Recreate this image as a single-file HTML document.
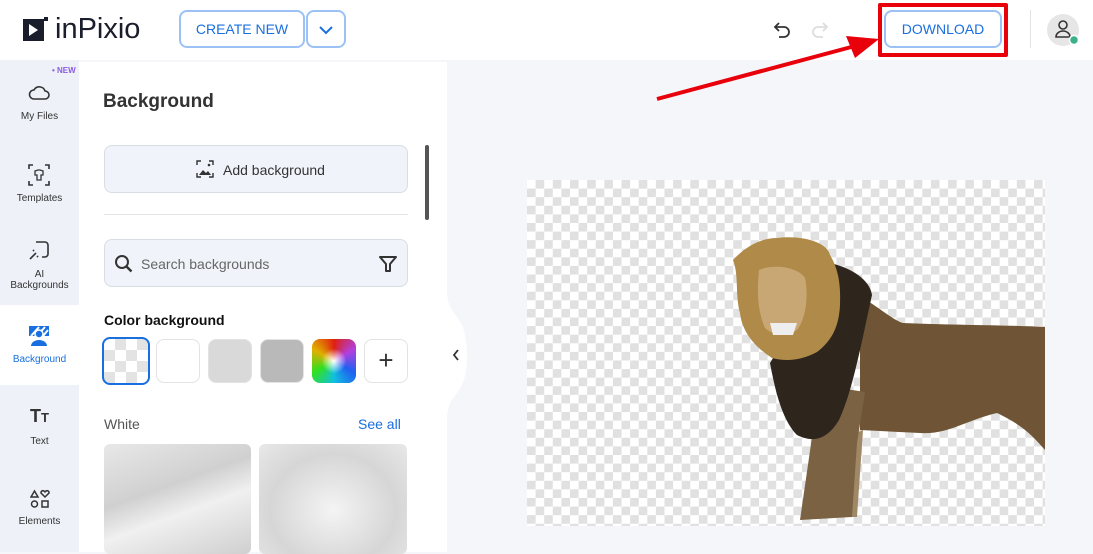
<!DOCTYPE html>
<html><head><style>
*{box-sizing:border-box;margin:0;padding:0}
body{width:1093px;height:552px;overflow:hidden;background:#f5f6fa;font-family:"Liberation Sans",sans-serif;position:relative}
.top{position:absolute;left:0;top:0;width:1093px;height:60px;background:#fff}
.side{position:absolute;left:0;top:60px;width:79px;height:492px;background:#eef1f8}
.si{position:absolute;left:0;width:79px;text-align:center;font-size:10px;color:#333}
.panel{position:absolute;left:79px;top:62px;width:368px;height:490px;background:#fff}
.btn{position:absolute;border:1px solid #d8dce6;background:#f0f3f9;border-radius:8px}
.sw{position:absolute;top:339px;width:44px;height:44px;border-radius:8px;border:1px solid #e3e3e3}
</style></head><body>
<div class="top"></div>
<svg style="position:absolute;left:22px;top:17px" width="28" height="26"><rect x="1" y="2" width="21" height="22" fill="#1a1d2b"/><path d="M7 7 L16 13 L7 19Z" fill="#fff"/><rect x="22" y="0" width="4" height="4" fill="#1a1d2b"/></svg>
<div style="position:absolute;left:55px;top:13px;font-size:29px;color:#1a1d2b">inPixio</div>
<div style="position:absolute;left:179px;top:10px;width:126px;height:38px;border:2px solid #9cc2f5;border-radius:8px;color:#1a6fe0;font-size:14px;text-align:center;line-height:34px">CREATE NEW</div>
<div style="position:absolute;left:306px;top:10px;width:40px;height:38px;border:2px solid #9cc2f5;border-radius:8px"><svg width="36" height="34"><path d="M12 15l6 6 6-6" stroke="#1a6fe0" stroke-width="2" fill="none"/></svg></div>
<svg style="position:absolute;left:773px;top:19px" width="60" height="20"><path d="M6 4L2 8l4 4M2 8h9a5 5 0 010 10H6" stroke="#333" stroke-width="1.8" fill="none"/><path d="M50 4l4 4-4 4M54 8h-9a5 5 0 000 10h5" stroke="#ddd" stroke-width="1.8" fill="none"/></svg>
<div style="position:absolute;left:878px;top:3px;width:130px;height:54px;border:4px solid #e8000b;border-radius:2px"></div>
<div style="position:absolute;left:884px;top:10px;width:118px;height:38px;border:2px solid #9cc2f5;border-radius:8px;color:#1a6fe0;font-size:14px;text-align:center;line-height:34px">DOWNLOAD</div>
<div style="position:absolute;left:1030px;top:10px;width:1px;height:38px;background:#e3e3e3"></div>
<div style="position:absolute;left:1047px;top:14px;width:32px;height:32px;border-radius:50%;background:#e6e6e6"></div>
<svg style="position:absolute;left:1047px;top:14px" width="40" height="36"><circle cx="16" cy="11" r="4" stroke="#333" stroke-width="1.6" fill="none"/><path d="M9 23a7 6 0 0114 0z" stroke="#333" stroke-width="1.6" fill="none"/><circle cx="27" cy="26" r="4.5" fill="#3cb08d" stroke="#fff" stroke-width="1.5"/></svg>
<svg style="position:absolute;left:650px;top:30px" width="240" height="80"><path d="M7 69 L205 16" stroke="#e8000b" stroke-width="4"/><path d="M229 9 L196 6 L205 28Z" fill="#e8000b"/></svg>

<div class="side"></div>
<div style="position:absolute;left:0;top:305px;width:79px;height:80px;background:#fff"></div>
<div style="position:absolute;left:52px;top:66px;font-size:8px;font-weight:bold;color:#8a5ce0">• NEW</div>
<svg style="position:absolute;left:28px;top:84px" width="22" height="18"><path d="M6 15h11a4 4 0 000-8 6 6 0 00-11-1 4 4 0 000 9z" stroke="#333" stroke-width="1.6" fill="none"/></svg>
<div class="si" style="top:111px">My Files</div>
<svg style="position:absolute;left:28px;top:164px" width="22" height="22"><path d="M1 5V1h4M17 1h4v4M21 17v4h-4M5 21H1v-4" stroke="#333" stroke-width="1.6" fill="none"/><path d="M7 7l3-1h2l3 1v4h-2v5H9v-5H7z" stroke="#333" stroke-width="1.3" fill="none"/></svg>
<div class="si" style="top:193px">Templates</div>
<svg style="position:absolute;left:28px;top:240px" width="22" height="22"><path d="M8 2h9a3 3 0 013 3v9a3 3 0 01-3 3h-3" stroke="#333" stroke-width="1.6" fill="none"/><path d="M2 19l6-6M5 10l1 1M9 16l1 1" stroke="#333" stroke-width="1.6"/></svg>
<div class="si" style="top:269px;line-height:11px">AI<br>Backgrounds</div>
<svg style="position:absolute;left:28px;top:325px" width="22" height="22"><rect x="1" y="1" width="20" height="10" fill="#1a6fe0"/><path d="M3 11l8-9M9 11l8-9M15 11l5-6" stroke="#fff" stroke-width="2"/><circle cx="11" cy="9" r="4" fill="#1a6fe0" stroke="#fff" stroke-width="1.5"/><path d="M3 21a8 6 0 0116 0z" fill="#1a6fe0"/></svg>
<div class="si" style="top:354px;color:#1a6fe0">Background</div>
<div style="position:absolute;left:30px;top:406px;font-size:18px;font-weight:bold;color:#333">T<span style="font-size:13px">T</span></div>
<div class="si" style="top:436px">Text</div>
<svg style="position:absolute;left:30px;top:489px" width="20" height="20"><path d="M1 8l3.5-6 3.5 6z" stroke="#333" stroke-width="1.5" fill="none"/><path d="M15 8l-4-4a2 2 0 013-2l1 1 1-1a2 2 0 013 2z" stroke="#333" stroke-width="1.5" fill="none"/><circle cx="4.5" cy="15" r="3" stroke="#333" stroke-width="1.5" fill="none"/><rect x="12" y="12" width="6" height="6" stroke="#333" stroke-width="1.5" fill="none"/></svg>
<div class="si" style="top:516px">Elements</div>

<div class="panel"></div>
<div style="position:absolute;left:103px;top:91px;font-size:19px;font-weight:bold;color:#333">Background</div>
<div style="position:absolute;left:425px;top:145px;width:4px;height:75px;border-radius:2px;background:#555"></div>
<div class="btn" style="left:104px;top:145px;width:304px;height:48px"></div>
<svg style="position:absolute;left:196px;top:160px" width="18" height="18"><path d="M1 5V1h4M13 1h4v4M17 13v4h-4M5 17H1v-4" stroke="#333" stroke-width="1.4" fill="none"/><path d="M3 15l4-5 3 3 2-2 3 4z" fill="#333"/><circle cx="13" cy="5" r="1.3" fill="#333"/></svg>
<div style="position:absolute;left:223px;top:162px;font-size:14px;color:#333">Add background</div>
<div style="position:absolute;left:104px;top:214px;width:304px;height:1px;background:#e3e3e3"></div>
<div class="btn" style="left:104px;top:239px;width:304px;height:48px"></div>
<svg style="position:absolute;left:114px;top:254px" width="20" height="20"><circle cx="8" cy="8" r="6" stroke="#333" stroke-width="2" fill="none"/><path d="M12.5 12.5l5 5" stroke="#333" stroke-width="2.4"/></svg>
<div style="position:absolute;left:141px;top:256px;font-size:14px;color:#666">Search backgrounds</div>
<svg style="position:absolute;left:378px;top:254px" width="20" height="20"><path d="M2 3h16l-6 7v7h-4v-7z" stroke="#333" stroke-width="2" fill="none" stroke-linejoin="round"/></svg>
<div style="position:absolute;left:104px;top:312px;font-size:14px;font-weight:bold;color:#111">Color background</div>
<div class="sw" style="left:102px;top:337px;width:48px;height:48px;border:2px solid #1a6fe0;background-color:#fff;background-image:linear-gradient(45deg,#e3e3e3 25%,transparent 25%,transparent 75%,#e3e3e3 75%),linear-gradient(45deg,#e3e3e3 25%,transparent 25%,transparent 75%,#e3e3e3 75%);background-size:22px 22px;background-position:0 0,11px 11px"></div>
<div class="sw" style="left:156px;background:#fff"></div>
<div class="sw" style="left:208px;background:#d9d9d9"></div>
<div class="sw" style="left:260px;background:#b9b9b9"></div>
<div class="sw" style="left:312px;border:none;background:radial-gradient(circle at 50% 50%,#fff 0,rgba(255,255,255,0) 40%),conic-gradient(#e02010,#b040e0,#2060f0,#10c0e0,#30e020,#e0b000,#e02010)"></div>
<div class="sw" style="left:364px;background:#fff;text-align:center;font-size:26px;line-height:40px;color:#333">+</div>
<div style="position:absolute;left:104px;top:416px;font-size:14px;color:#555">White</div>
<div style="position:absolute;left:358px;top:416px;font-size:14px;color:#1a6fe0">See all</div>
<div style="position:absolute;left:104px;top:444px;width:147px;height:110px;border-radius:6px;background:linear-gradient(160deg,#e8e8e8,#d0d0d0 40%,#f0f0f0 60%,#cfcfcf)"></div>
<div style="position:absolute;left:259px;top:444px;width:148px;height:110px;border-radius:6px;background:radial-gradient(ellipse at 50% 60%,#f4f4f4,#d6d6d6 60%,#e8e8e8)"></div>
<svg style="position:absolute;left:447px;top:290px" width="22" height="130"><path d="M0 0 C0 30 20 20 20 65 C20 110 0 100 0 130Z" fill="#fff"/><path d="M11 60l-4 5 4 5" stroke="#333" stroke-width="1.8" fill="none"/></svg>

<div style="position:absolute;left:527px;top:180px;width:518px;height:346px;background-color:#fff;background-image:linear-gradient(45deg,#e0e0e0 25%,transparent 25%,transparent 75%,#e0e0e0 75%),linear-gradient(45deg,#e0e0e0 25%,transparent 25%,transparent 75%,#e0e0e0 75%);background-size:17.2px 17.2px;background-position:0 0,8.6px 8.6px"></div>
<svg style="position:absolute;left:527px;top:180px" width="518" height="346">
<path d="M320 257 L336 250 L330 337 L310 337Z" fill="#a08866"/>
<path d="M333 117 C350 125 365 140 376 143 C420 145 480 145 518 147 L518 270 C505 255 495 245 470 233 C440 240 420 255 393 253 L333 250Z" fill="#6f5535"/>
<path d="M293 205 L338 212 L330 263 L325 337 L273 340 L285 257Z" fill="#7b6242"/>
<path d="M303 83 C325 88 343 100 345 115 C335 160 326 210 312 240 C300 260 286 263 270 255 C255 240 248 210 243 183Z" fill="#2e261d"/>
<path d="M206 80 C220 65 235 58 250 58 C275 55 300 62 303 75 C315 95 313 117 313 125 C312 145 306 160 290 172 C275 180 260 182 245 178 C225 165 215 150 213 133 C208 115 212 95 206 80Z" fill="#b08a48"/>
<path d="M232 90 C245 84 270 86 278 98 C282 118 278 140 270 150 C258 157 245 155 238 148 C230 130 230 110 232 90Z" fill="#c9a774"/>
<path d="M243 143 L270 143 L266 155 L246 155Z" fill="#eee"/>
</svg>
</body></html>
